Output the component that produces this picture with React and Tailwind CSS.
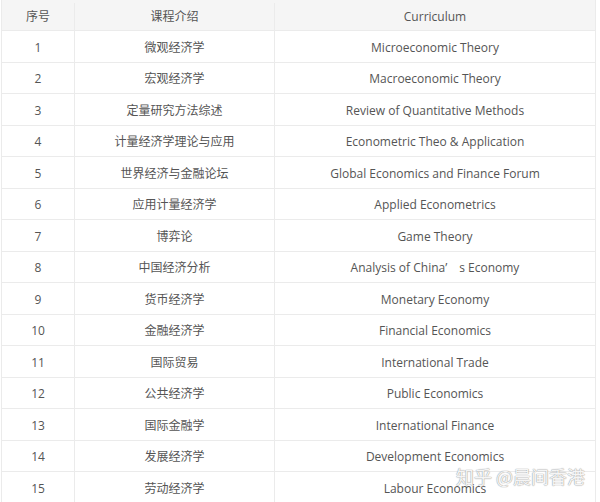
const rows = [
  ["1", "微观经济学", "Microeconomic Theory"],
  ["2", "宏观经济学", "Macroeconomic Theory"],
  ["3", "定量研究方法综述", "Review of Quantitative Methods"],
  ["4", "计量经济学理论与应用", "Econometric Theo & Application"],
  ["5", "世界经济与金融论坛", "Global Economics and Finance Forum"],
  ["6", "应用计量经济学", "Applied Econometrics"],
  ["7", "博弈论", "Game Theory"],
  ["8", "中国经济分析", null],
  ["9", "货币经济学", "Monetary Economy"],
  ["10", "金融经济学", "Financial Economics"],
  ["11", "国际贸易", "International Trade"],
  ["12", "公共经济学", "Public Economics"],
  ["13", "国际金融学", "International Finance"],
  ["14", "发展经济学", "Development Economics"],
  ["15", "劳动经济学", "Labour Economics"],
];

export default function App() {
  return (
    <div
      className="relative w-[600px] h-[502px] overflow-hidden bg-white text-[12px] text-[#555]"
      style={{ fontFamily: '"Open Sans", "Noto Sans CJK SC", sans-serif' }}
    >
      <div className="ml-[1px] w-[595px] border-l border-r border-[#ebebeb]">
        <div className="flex h-[31px] pt-[3px] bg-[#f5f5f5] border-b border-[#ebebeb]">
          <div className="w-[73px] flex items-center justify-center border-r border-[#ebebeb]">序号</div>
          <div className="w-[200px] flex items-center justify-center border-r border-[#ebebeb]">课程介绍</div>
          <div className="flex-1 flex items-center justify-center">Curriculum</div>
        </div>
        {rows.map((r) => (
          <div key={r[0]} className="flex h-[31.5px] border-b border-[#ebebeb]">
            <div className="w-[73px] pt-[3px] flex items-center justify-center border-r border-[#ebebeb]">{r[0]}</div>
            <div className="w-[200px] pt-[3px] flex items-center justify-center border-r border-[#ebebeb]">{r[1]}</div>
            <div className="flex-1 pt-[3px] flex items-center justify-center">
              {r[2] ?? (
                <span>
                  Analysis of China<span className="inline-block w-[14px]">{"\u2019"}</span>s Economy
                </span>
              )}
            </div>
          </div>
        ))}
      </div>
      <div
        className="absolute left-[456px] top-[467px] text-[18px] text-white/90 leading-none"
        style={{ fontFamily: '"Noto Sans CJK SC", sans-serif', textShadow: "0 0 1px #999, 0 0 1px #999" }}
      >
        知乎 @晨间香港
      </div>
    </div>
  );
}
